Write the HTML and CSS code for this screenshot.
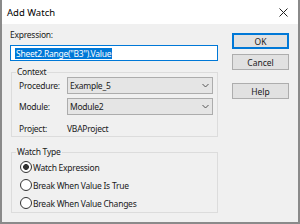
FILE: index.html
```html
<!DOCTYPE html>
<html>
<head>
<meta charset="utf-8">
<link rel="stylesheet" href="styles.css">
</head>
<body>
<div class="window">
  <div class="titlebar">
    <span class="title">Add Watch</span>
    <svg class="close" width="9" height="9" viewBox="0 0 9 9"><path d="M0.5 0.5L8.5 8.5M8.5 0.5L0.5 8.5" stroke="#222" stroke-width="1" fill="none"/></svg>
  </div>
  <div class="content">
    <div class="main">
      <div class="label">Expression:</div>
      <div class="textbox"><span class="sel">Sheet2.Range("B3").Value</span></div>
      <fieldset class="group context">
        <legend>Context</legend>
        <div class="row">
          <span class="rlabel">Procedure:</span>
          <div class="combo"><span>Example_5</span><svg width="7" height="5" viewBox="0 0 7 5"><path d="M0.5 1L3.5 4L6.5 1" stroke="#555" stroke-width="1" fill="none"/></svg></div>
        </div>
        <div class="row row2">
          <span class="rlabel">Module:</span>
          <div class="combo"><span>Module2</span><svg width="7" height="5" viewBox="0 0 7 5"><path d="M0.5 1L3.5 4L6.5 1" stroke="#555" stroke-width="1" fill="none"/></svg></div>
        </div>
        <div class="row row3">
          <span class="rlabel">Project:</span>
          <span>VBAProject</span>
        </div>
      </fieldset>
      <fieldset class="group wtype">
        <legend>Watch Type</legend>
        <div class="radio checked"><span class="dot"></span>Watch Expression</div>
        <div class="radio"><span class="dot"></span>Break When Value Is True</div>
        <div class="radio"><span class="dot"></span>Break When Value Changes</div>
      </fieldset>
    </div>
    <div class="buttons">
      <button class="btn default">OK</button>
      <button class="btn cancel">Cancel</button>
      <button class="btn help">Help</button>
    </div>
  </div>
</div>
</body>
</html>
```
FILE: styles.css
```css
* { box-sizing: border-box; }
html, body { margin: 0; padding: 0; }
body {
  font-family: "Noto Sans", "Segoe UI", sans-serif;
  font-size: 8.5px;
  letter-spacing: -0.25px;
  color: #1a1a1a;
  width: 300px;
  height: 224px;
  overflow: hidden;
}
.window {
  width: 300px;
  height: 224px;
  display: flex;
  flex-direction: column;
  background: #f0f0f0;
  border: 2px solid #8a8a8a;
  border-top: 0;
}
.titlebar {
  height: 24px;
  flex: none;
  background: #fff;
  display: flex;
  align-items: center;
  justify-content: space-between;
  padding: 0 10px 0 5px;
  font-size: 9.5px;
  letter-spacing: 0;
  color: #000;
}
.close { display: block; }
.content {
  flex: 1;
  display: flex;
  padding: 4px 9px 0 8px;
  gap: 14px;
}
.main {
  width: 208px;
  display: flex;
  flex-direction: column;
}
.label { line-height: 14px; }
.textbox {
  margin-top: 3px;
  height: 16px;
  border: 1px solid #0078d7;
  background: #fff;
  padding-left: 4px;
  display: flex;
  align-items: center;
}
.sel {
  background: #0078d7;
  color: #fff;
  line-height: 11px;
  padding: 0 1px;
}
.group {
  margin: 6px 0 0 1px;
  padding: 0 4px 0 7px;
  border: 1px solid #dcdcdc;
  min-width: 0;
}
.group legend {
  padding: 0 1px;
  margin-left: -3px;
  line-height: 10px;
}
.row {
  display: flex;
  align-items: center;
}
.rlabel { width: 48px; flex: none; }
.combo {
  flex: 1;
  height: 17px;
  background: #e5e5e5;
  border: 1px solid #acacac;
  display: flex;
  align-items: center;
  justify-content: space-between;
  padding: 0 3px 0 2px;
}
.combo svg { display: block; }
.row2 { margin-top: 4px; }
.row3 { margin-top: 7px; line-height: 14px; }
.wtype {
  margin-top: 10px;
  padding-top: 1px;
}
.radio {
  display: flex;
  align-items: center;
  height: 18px;
  gap: 1px;
}
.dot {
  width: 12px;
  height: 12px;
  border-radius: 50%;
  border: 1px solid #333;
  background: #fff;
  margin-left: 1px;
}
.checked .dot {
  background: radial-gradient(circle, #333 0 2.6px, #fff 3.2px);
}
.buttons {
  width: 57px;
  display: flex;
  flex-direction: column;
  padding-top: 5px;
}
.btn {
  height: 16px;
  background: #e1e1e1;
  border: 1px solid #adadad;
  font: inherit;
  color: #1a1a1a;
  padding: 0;
  margin: 0;
}
.btn.default { border: 2px solid #0078d7; }
.btn.cancel { margin-top: 5px; }
.btn.help { margin-top: 13px; }
```
